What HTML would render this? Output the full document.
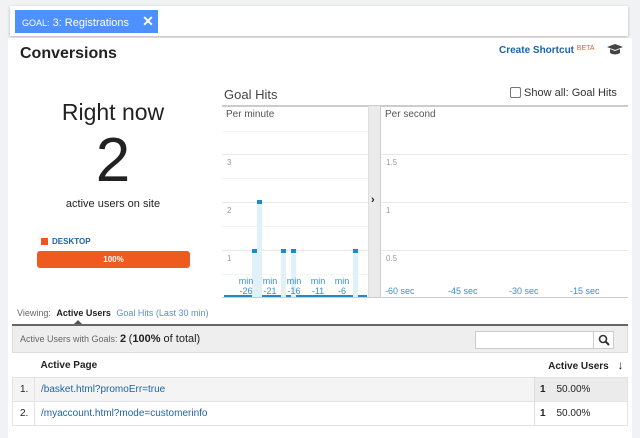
<!DOCTYPE html>
<html><head><style>
*{margin:0;padding:0;box-sizing:border-box}
body{width:640px;height:438px;background:#f1f2f4;font-family:"Liberation Sans",sans-serif;position:relative;overflow:hidden;color:#222}
.a{position:absolute}
.topbar{left:10px;top:6px;width:618px;height:30px;background:#fff;box-shadow:0 1px 3px rgba(0,0,0,.25)}
.chip{left:15px;top:10px;width:143px;height:23px;background:#4d90fe;color:#fff;font-size:11px;line-height:23px;padding-left:7px}
.panel{left:8px;top:38px;width:624px;height:400px;background:#fff}
.g{background:#e8e8e8;height:1px}
.gl{background:#f4f4f4;height:1px}
.bar{background:#e1f1fa}
.cap{background:#1d8bc7;height:4px}
.xl{font-size:9px;color:#3a8fc7;text-align:center}
.yl{font-size:8px;color:#999}
td{font-size:10px}
</style></head><body>
<div class="a topbar"></div>
<div class="a chip"><span style="font-size:9px">GOAL:</span> 3: Registrations <span style="margin-left:10px;font-size:14px;font-weight:bold">✕</span></div>
<div class="a panel"></div>
<div class="a" style="left:20px;top:45px;font-size:16px;font-weight:bold">Conversions</div>
<div class="a" style="left:499px;top:45px;font-size:10px;font-weight:bold;color:#1c63a8">Create Shortcut <span style="font-size:7px;color:#e8642a;font-weight:normal;vertical-align:top">BETA</span></div>
<svg class="a" style="left:606px;top:43px" width="18" height="13"><path d="M1 4 L9 1 L17 4 L9 7Z" fill="#444"/><path d="M4 6 V10 Q9 13 14 10 V6 L9 8Z" fill="#444"/></svg>
<div class="a" style="left:30px;top:99px;width:166px;text-align:center;font-size:23px">Right now</div>
<div class="a" style="left:30px;top:128px;width:166px;text-align:center;font-size:62px;line-height:66px">2</div>
<div class="a" style="left:30px;top:198px;width:166px;text-align:center;font-size:11px">active users on site</div>
<div class="a" style="left:41px;top:238px;width:7px;height:7px;background:#e8581f"></div>
<div class="a" style="left:52px;top:237px;font-size:8px;font-weight:bold;color:#1c63a8">DESKTOP</div>
<div class="a" style="left:37px;top:251px;width:153px;height:17px;background:#ef5a1e;border-radius:3px;color:#fff;font-size:8px;font-weight:bold;text-align:center;line-height:17px">100%</div>
<div class="a" style="left:224px;top:87px;font-size:13px;color:#444">Goal Hits</div>
<div class="a" style="left:510px;top:87px;width:11px;height:11px;border:1px solid #777;border-radius:2px"></div>
<div class="a" style="left:524px;top:87px;font-size:11px;color:#333">Show all: Goal Hits</div>
<div class="a" style="left:222px;top:105px;width:406px;height:2px;background:#ccc"></div>
<div class="a" style="left:368px;top:106px;width:13px;height:191px;background:#ebebeb;border-left:1px solid #ddd;border-right:1px solid #ccc"></div>
<div class="a" style="left:371px;top:194px;font-size:11px;font-weight:bold">›</div>
<div class="a" style="left:226px;top:109px;font-size:10px;color:#555">Per minute</div>
<div class="a" style="left:385px;top:109px;font-size:10px;color:#555">Per second</div>
<div class="a gl" style="left:222px;top:131px;width:146px"></div>
<div class="a g" style="left:222px;top:154px;width:146px"></div>
<div class="a gl" style="left:222px;top:178px;width:146px"></div>
<div class="a g" style="left:222px;top:202px;width:146px"></div>
<div class="a gl" style="left:222px;top:226px;width:146px"></div>
<div class="a g" style="left:222px;top:250px;width:146px"></div>
<div class="a gl" style="left:222px;top:274px;width:146px"></div>
<div class="a g" style="left:381px;top:154px;width:247px"></div>
<div class="a g" style="left:381px;top:202px;width:247px"></div>
<div class="a g" style="left:381px;top:250px;width:247px"></div>
<div class="a g" style="left:222px;top:297px;width:406px;background:#ccc"></div>
<div class="a yl" style="left:227px;top:158px">3</div>
<div class="a yl" style="left:227px;top:206px">2</div>
<div class="a yl" style="left:227px;top:254px">1</div>
<div class="a yl" style="left:386px;top:158px">1.5</div>
<div class="a yl" style="left:386px;top:206px">1</div>
<div class="a yl" style="left:386px;top:254px">0.5</div>
<div class="a bar" style="left:252px;top:250px;width:6px;height:47px"></div><div class="a cap" style="left:252px;top:249px;width:6px"></div>
<div class="a bar" style="left:257px;top:202px;width:5px;height:95px"></div><div class="a cap" style="left:257px;top:200px;width:5px"></div>
<div class="a bar" style="left:281px;top:250px;width:5px;height:47px"></div><div class="a cap" style="left:281px;top:249px;width:5px"></div>
<div class="a bar" style="left:291px;top:250px;width:5px;height:47px"></div><div class="a cap" style="left:291px;top:249px;width:5px"></div>
<div class="a bar" style="left:353px;top:250px;width:5px;height:47px"></div><div class="a cap" style="left:353px;top:249px;width:5px"></div>
<div class="a" style="left:224px;top:295px;width:28px;height:2px;background:#1d8bc7"></div>
<div class="a" style="left:262px;top:295px;width:19px;height:2px;background:#1d8bc7"></div>
<div class="a" style="left:286px;top:295px;width:5px;height:2px;background:#1d8bc7"></div>
<div class="a" style="left:296px;top:295px;width:57px;height:2px;background:#1d8bc7"></div>
<div class="a" style="left:358px;top:295px;width:9px;height:2px;background:#1d8bc7"></div>
<div class="a xl" style="left:235px;top:276px;width:22px">min<br>-26</div>
<div class="a xl" style="left:259px;top:276px;width:22px">min<br>-21</div>
<div class="a xl" style="left:283px;top:276px;width:22px">min<br>-16</div>
<div class="a xl" style="left:307px;top:276px;width:22px">min<br>-11</div>
<div class="a xl" style="left:331px;top:276px;width:22px">min<br>-6</div>
<div class="a xl" style="left:385px;top:286px">-60 sec</div>
<div class="a xl" style="left:448px;top:286px">-45 sec</div>
<div class="a xl" style="left:509px;top:286px">-30 sec</div>
<div class="a xl" style="left:570px;top:286px">-15 sec</div>
<div class="a" style="left:17px;top:308px;font-size:9px;color:#666">Viewing: <b style="color:#222;margin-left:3px">Active Users</b> <span style="color:#5b8fc7;margin-left:3px">Goal Hits (Last 30 min)</span></div>
<div class="a" style="left:74px;top:320px;width:0;height:0;border:4px solid transparent;border-bottom-color:#555;border-top:0"></div>
<div class="a" style="left:12px;top:324px;width:616px;height:2px;background:#666"></div>
<div class="a" style="left:12px;top:326px;width:616px;height:27px;background:#eee;border:1px solid #ddd;border-top:0"></div>
<div class="a" style="left:20px;top:333px;font-size:9px;color:#666">Active Users with Goals: <b style="color:#222;font-size:11px">2</b> <span style="color:#222;font-size:11px">(<b>100%</b> of total)</span></div>
<div class="a" style="left:475px;top:331px;width:139px;height:18px;background:#fff;border:1px solid #ccc"></div>
<svg class="a" style="left:593px;top:331px;border-left:1px solid #ccc" width="21" height="18"><circle cx="9" cy="8" r="3.5" stroke="#333" stroke-width="1.6" fill="none"/><path d="M11.5 10.5 L15 14" stroke="#333" stroke-width="2"/></svg>
<table class="a" style="left:12px;top:354px;width:616px;border-collapse:collapse">
<tr style="height:23px;background:#fff"><td style="width:22px"></td><td style="font-weight:bold;padding-left:6px">Active Page</td><td colspan="2" style="font-weight:bold;text-align:right;padding-right:4px">Active Users <span style="font-weight:normal;font-size:12px;margin-left:6px">↓</span></td></tr>
<tr style="height:24px;background:#f4f4f4;border:1px solid #e3e3e3"><td style="padding-left:7px;border-right:1px solid #e3e3e3">1.</td><td style="padding-left:6px;color:#1c63a8">/basket.html?promoErr=true</td><td style="width:16px;font-weight:bold;background:#ebebeb;text-align:center;border-left:1px solid #ddd">1</td><td style="width:77px;padding-left:6px;background:#ebebeb">50.00%</td></tr>
<tr style="height:24px;background:#fff;border:1px solid #e3e3e3"><td style="padding-left:7px;border-right:1px solid #e3e3e3">2.</td><td style="padding-left:6px;color:#1c63a8">/myaccount.html?mode=customerinfo</td><td style="font-weight:bold;text-align:center;border-left:1px solid #ddd">1</td><td style="padding-left:6px">50.00%</td></tr>
</table>
</body></html>
